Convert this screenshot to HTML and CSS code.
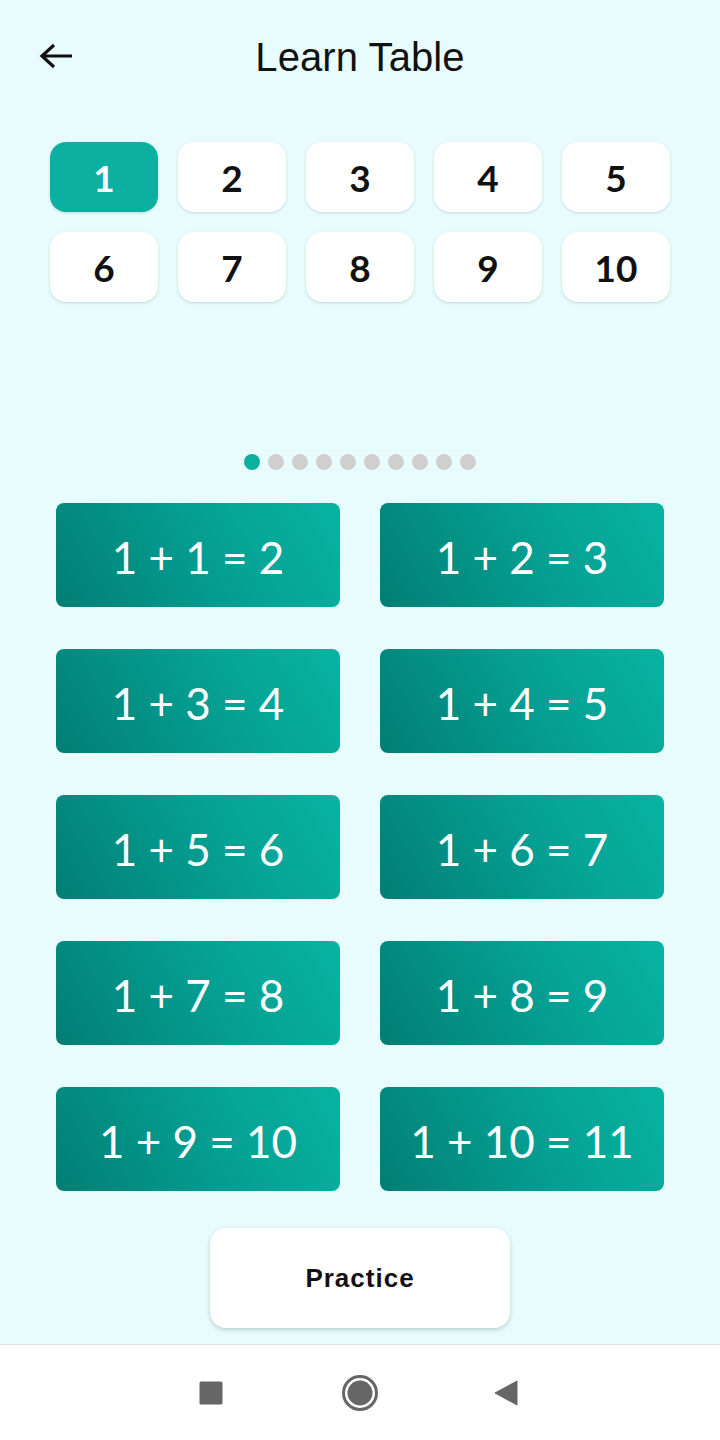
FILE: index.html
```html
<!DOCTYPE html>
<html lang="en">
<head>
<meta charset="utf-8">
<title>Learn Table</title>
<link rel="stylesheet" href="styles.css">
</head>
<body>
<div class="screen">
  <header class="header">
    <button class="back" aria-label="Back">
      <svg width="36" height="28" viewBox="0 0 36 28"><path d="M34 14H4M16 3L4 14l12 11" fill="none" stroke="#111" stroke-width="3.2" stroke-linejoin="miter"/></svg>
    </button>
    <h1 class="title">Learn Table</h1>
  </header>

  <div class="numbers">
    <button class="num active">1</button>
    <button class="num">2</button>
    <button class="num">3</button>
    <button class="num">4</button>
    <button class="num">5</button>
    <button class="num">6</button>
    <button class="num">7</button>
    <button class="num">8</button>
    <button class="num">9</button>
    <button class="num">10</button>
  </div>

  <div class="dots">
    <span class="dot active"></span><span class="dot"></span><span class="dot"></span><span class="dot"></span><span class="dot"></span><span class="dot"></span><span class="dot"></span><span class="dot"></span><span class="dot"></span><span class="dot"></span>
  </div>

  <div class="cards">
    <div class="card">1 + 1 = 2</div>
    <div class="card">1 + 2 = 3</div>
    <div class="card">1 + 3 = 4</div>
    <div class="card">1 + 4 = 5</div>
    <div class="card">1 + 5 = 6</div>
    <div class="card">1 + 6 = 7</div>
    <div class="card">1 + 7 = 8</div>
    <div class="card">1 + 8 = 9</div>
    <div class="card">1 + 9 = 10</div>
    <div class="card">1 + 10 = 11</div>
  </div>

  <div class="practice-wrap">
    <button class="practice">Practice</button>
  </div>

  <nav class="navbar">
    <svg class="nav-recent" width="24" height="24" viewBox="0 0 24 24"><rect x="0.5" y="0.5" width="23" height="23" rx="1.5" fill="#666"/></svg>
    <svg class="nav-home" width="38" height="38" viewBox="0 0 38 38"><circle cx="19" cy="19" r="16.5" fill="none" stroke="#666" stroke-width="3"/><circle cx="19" cy="19" r="12.5" fill="#666"/></svg>
    <svg class="nav-back" width="24" height="26" viewBox="0 0 24 26"><path d="M23 1L1 13l22 12z" fill="#666" stroke="#666" stroke-width="1" stroke-linejoin="round"/></svg>
  </nav>
</div>
</body>
</html>
```

FILE: styles.css
```css
* { box-sizing: border-box; }
html, body { margin: 0; padding: 0; }
body {
  background: #e9fcfd;
  font-family: "Liberation Sans", Arial, sans-serif;
  width: 720px;
  height: 1440px;
  overflow: hidden;
}
.screen {
  display: flex;
  flex-direction: column;
  height: 1440px;
}
.header {
  position: relative;
  height: 114px;
  display: flex;
  align-items: center;
  justify-content: center;
}
.back {
  position: absolute;
  left: 38px;
  top: 42px;
  border: 0;
  background: none;
  padding: 0;
  width: 36px;
  height: 28px;
}
.back svg { display: block; }
.title {
  margin: 0;
  font-weight: 400;
  font-size: 40px;
  color: #111;
  letter-spacing: 0.1px;
}
.numbers {
  margin-top: 28px;
  padding: 0 50px;
  display: grid;
  grid-template-columns: repeat(5, 108px);
  column-gap: 20px;
  row-gap: 20px;
}
.num {
  height: 70px;
  border: 0;
  border-radius: 16px;
  background: #fff;
  box-shadow: 0 1px 3px rgba(0, 60, 60, 0.18);
  font-family: Lato, "Liberation Sans", sans-serif;
  font-weight: 700;
  font-size: 37px;
  color: #111;
  padding: 0;
}
.num.active {
  background: #0cb0a1;
  color: #fff;
}
.dots {
  margin-top: 152px;
  display: flex;
  justify-content: center;
  gap: 8px;
  height: 16px;
}
.dot {
  width: 16px;
  height: 16px;
  border-radius: 50%;
  background: #d0cfd0;
}
.dot.active { background: #0cb0a1; }
.cards {
  margin-top: 33px;
  padding: 0 56px;
  display: grid;
  grid-template-columns: 284px 284px;
  column-gap: 40px;
  row-gap: 42px;
}
.card {
  height: 104px;
  border-radius: 8px;
  background: linear-gradient(60deg, #027e74 0%, #05a295 60%, #07b3a2 100%);
  color: #fff;
  font-family: Lato, "Liberation Sans", sans-serif;
  font-weight: 400;
  font-size: 44px;
  display: flex;
  align-items: center;
  justify-content: center;
  padding-top: 4px;
}
.practice-wrap {
  margin-top: 37px;
  display: flex;
  justify-content: center;
}
.practice {
  width: 300px;
  height: 100px;
  border: 0;
  border-radius: 16px;
  background: #fff;
  box-shadow: 0 2px 5px rgba(0, 50, 50, 0.22);
  font-family: "Liberation Sans", Arial, sans-serif;
  font-weight: 700;
  font-size: 26px;
  letter-spacing: 1px;
  color: #111;
  padding-top: 2px;
}
.navbar {
  margin-top: auto;
  height: 96px;
  background: #fff;
  border-top: 1px solid #dde3e3;
  display: flex;
  align-items: center;
  justify-content: flex-start;
  padding-left: 199px;
}
.navbar svg { display: block; }
.nav-home { margin-left: 118px; }
.nav-back { margin-left: 115px; }
```
